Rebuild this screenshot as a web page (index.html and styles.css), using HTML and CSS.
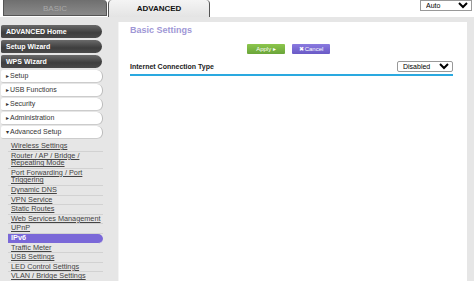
FILE: index.html
```html
<!DOCTYPE html>
<html lang="en">
<head>
    <meta charset="UTF-8">
    <title>NETGEAR Router - IPv6</title>
    <link rel="stylesheet" href="styles.css">
</head>
<body>
    <div class="top">
        <div class="tab tab-basic">BASIC</div>
        <div class="tab tab-advanced">ADVANCED</div>
        <div class="lang">
            <select>
                <option>Auto</option>
            </select>
        </div>
    </div>

    <div class="page">
        <div class="sidebar">
            <div class="dark-btn">ADVANCED Home</div>
            <div class="dark-btn">Setup Wizard</div>
            <div class="dark-btn">WPS Wizard</div>

            <div class="pill"><span class="arr">&#9656;</span>Setup</div>
            <div class="pill"><span class="arr">&#9656;</span>USB Functions</div>
            <div class="pill"><span class="arr">&#9656;</span>Security</div>
            <div class="pill"><span class="arr">&#9656;</span>Administration</div>
            <div class="pill"><span class="arr">&#9662;</span>Advanced Setup</div>

            <ul class="sub">
                <li><a href="#">Wireless Settings</a></li>
                <li class="wrap"><a href="#">Router / AP / Bridge / Repeating Mode</a></li>
                <li class="wrap"><a href="#">Port Forwarding / Port Triggering</a></li>
                <li><a href="#">Dynamic DNS</a></li>
                <li><a href="#">VPN Service</a></li>
                <li><a href="#">Static Routes</a></li>
                <li><a href="#">Web Services Management</a></li>
                <li><a href="#">UPnP</a></li>
                <li class="active"><a href="#">IPv6</a></li>
                <li><a href="#">Traffic Meter</a></li>
                <li><a href="#">USB Settings</a></li>
                <li><a href="#">LED Control Settings</a></li>
                <li><a href="#">VLAN / Bridge Settings</a></li>
            </ul>
        </div>

        <div class="main">
            <h2>Basic Settings</h2>
            <div class="actions">
                <button class="btn apply">Apply &#9656;</button>
                <button class="btn cancel"><span class="x">&#10006;</span>Cancel</button>
            </div>
            <div class="row">
                <span class="label">Internet Connection Type</span>
                <select class="conn">
                    <option>Disabled</option>
                </select>
            </div>
        </div>
    </div>
</body>
</html>
```

FILE: styles.css
```css
body {
    margin: 0;
    font-family: "Liberation Sans", Arial, sans-serif;
    background-color: #ffffff;
    width: 474px;
    height: 281px;
    overflow: hidden;
}
.top {
    display: flex;
    align-items: flex-start;
    height: 17px;
    background-color: #ffffff;
}
.tab {
    height: 16px;
    line-height: 17px;
    text-align: center;
    font-size: 8px;
    font-weight: bold;
    box-sizing: border-box;
}
.tab-basic {
    width: 104px;
    margin-left: 3px;
    background: linear-gradient(#6f6f6f, #8a8a8a);
    color: #a8a8a8;
    border: 1px solid #555;
    border-top: none;
    border-radius: 0 4px 0 0;
    font-weight: normal;
}
.tab-advanced {
    width: 102px;
    margin-left: 1px;
    background: linear-gradient(#f4f4f4, #e4e4e4);
    color: #111;
    border: 1px solid #555;
    border-top: none;
    border-bottom: none;
    border-radius: 4px 4px 0 0;
    height: 17px;
}
.lang {
    margin-left: auto;
    margin-right: 2px;
}
.lang select {
    display: block;
    width: 52px;
    height: 11px;
    font-size: 7px;
    font-family: "Liberation Sans", Arial, sans-serif;
    padding: 0 1px;
    margin: 0;
    border: 1px solid #999;
    border-radius: 0;
    background: #fff;
}
.page {
    display: flex;
    background-color: #e6e6e6;
    height: 264px;
    padding-top: 5px;
    box-sizing: border-box;
}
.sidebar {
    width: 104px;
    flex-shrink: 0;
    margin-left: 1px;
    padding-top: 3px;
}
.dark-btn {
    height: 13px;
    line-height: 13px;
    margin-bottom: 2px;
    padding-left: 5px;
    font-size: 7px;
    font-weight: bold;
    color: #fff;
    background: linear-gradient(#6a6a6a, #3e3e3e 60%, #4a4a4a);
    border-radius: 2px 7px 7px 2px;
    width: 96px;
}
.pill {
    height: 12px;
    line-height: 12px;
    margin-top: 1px;
    padding-left: 5px;
    font-size: 7px;
    color: #333;
    background: #fff;
    border-right: 1px solid #bbb;
    border-bottom: 1px solid #ccc;
    border-radius: 2px 6px 6px 2px;
    width: 96px;
}
.pill .arr {
    font-size: 6px;
    margin-right: 1px;
}
.sub {
    list-style: none;
    margin: 3px 0 0 0;
    padding: 0 0 0 7px;
}
.sub li {
    font-size: 7.3px;
    line-height: 7.6px;
    padding: 0 0 1px 3px;
    border-bottom: 1px solid #d2d2d2;
    width: 92px;
    white-space: nowrap;
}
.sub li.wrap {
    white-space: normal;
    padding-right: 12px;
    width: 80px;
}
.sub a {
    color: #444;
    text-decoration: underline;
}
.sub li.active {
    background: #7a68d8;
    border-radius: 0 6px 6px 0;
    border-bottom-color: #e6e6e6;
}
.sub li.active a {
    color: #fff;
    text-decoration: none;
    font-weight: bold;
}
.main {
    margin-left: 13px;
    width: 349px;
    flex-shrink: 0;
    background: #ffffff;
    padding: 3px 14px 0 11px;
    box-sizing: border-box;
    border-left: 1px solid #f4f4f4;
}
.main h2 {
    margin: 0;
    font-size: 9px;
    font-weight: bold;
    color: #9f97d6;
}
.actions {
    display: flex;
    justify-content: center;
    gap: 7px;
    margin-top: 9px;
    padding-right: 6px;
}
.btn {
    width: 38px;
    height: 10px;
    border: none;
    border-radius: 1px;
    font-size: 6px;
    font-family: "Liberation Sans", Arial, sans-serif;
    color: #fff;
    padding: 0;
    line-height: 10px;
}
.apply {
    background: linear-gradient(#8cc64c, #6aa53a);
}
.cancel {
    background: linear-gradient(#8a7ae0, #6a5ac6);
}
.cancel .x {
    font-size: 6px;
    margin-right: 1px;
}
.row {
    display: flex;
    justify-content: space-between;
    align-items: center;
    margin-top: 7px;
    padding-bottom: 2px;
    border-bottom: 2px solid #2aa9e0;
}
.label {
    font-size: 7px;
    font-weight: bold;
    color: #222;
}
.conn {
    width: 56px;
    height: 11px;
    font-size: 7px;
    font-family: "Liberation Sans", Arial, sans-serif;
    padding: 0 1px;
    border: 1px solid #999;
    border-radius: 2px;
    background: #fff;
}
```
